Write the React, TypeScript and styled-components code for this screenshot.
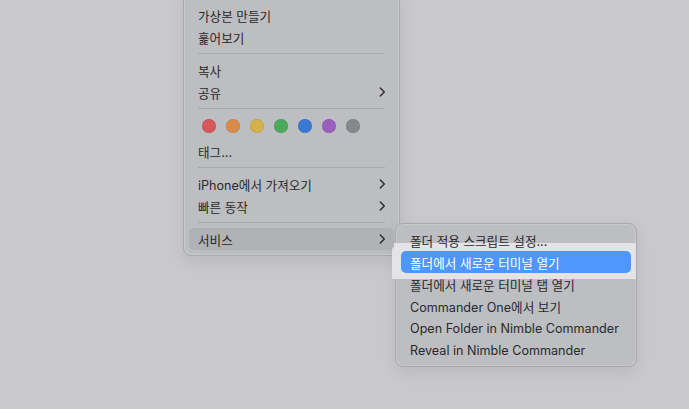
import React from "react";
import styled, { createGlobalStyle, css } from "styled-components";

const GlobalStyle = createGlobalStyle`
  html, body {
    margin: 0;
    padding: 0;
    background: #c9c9cd;
  }
  body {
    font-family: "Inter", "Noto Sans CJK KR", "Noto Sans", sans-serif;
    -webkit-font-smoothing: antialiased;
  }
`;

const Desktop = styled.div`
  position: relative;
  width: 689px;
  height: 409px;
  overflow: hidden;
  background: #c9c9cd;
`;

const Menu = styled.div<{ $left: number; $top: number; $width: number; $padTop?: number }>`
  position: absolute;
  left: ${(p) => p.$left}px;
  top: ${(p) => p.$top}px;
  width: ${(p) => p.$width}px;
  box-sizing: border-box;
  padding: ${(p) => p.$padTop ?? 5}px 5px 5px;
  display: flex;
  flex-direction: column;
  background: #bdbec2;
  border: 1px solid #a8a9ad;
  border-radius: 8px;
  box-shadow: inset 0 0 0 1px rgba(255, 255, 255, 0.18),
    0 6px 16px rgba(0, 0, 0, 0.08);
`;

const Row = styled.div<{ $state?: "gray" | "blue" }>`
  position: relative;
  z-index: 1;
  height: 22px;
  display: flex;
  align-items: center;
  justify-content: space-between;
  padding: 0 8px 0 9px;
  border-radius: 5px;
  font-size: 12.6px;
  color: #29292b;
  white-space: nowrap;
  ${(p) =>
    p.$state === "gray" &&
    css`
      background: #b1b2b6;
    `}
  ${(p) =>
    p.$state === "blue" &&
    css`
      background: #4f97fe;
      color: #ffffff;
    `}
`;

const Separator = styled.div`
  height: 11px;
  display: flex;
  align-items: center;
  padding: 0 9px;
  &::after {
    content: "";
    flex: 1;
    height: 1px;
    background: #a9aaae;
  }
`;

const DotRow = styled.div`
  height: 26px;
  box-sizing: border-box;
  padding: 5px 9px 0 13px;
  display: flex;
  align-items: flex-start;
  gap: 10px;
`;

const Dot = styled.span<{ $color: string }>`
  width: 14px;
  height: 14px;
  border-radius: 50%;
  background: ${(p) => p.$color};
  box-shadow: inset 0 0 0 0.5px rgba(0, 0, 0, 0.12);
`;

const Band = styled.div`
  position: absolute;
  left: -4px;
  top: 19px;
  width: 244px;
  height: 36px;
  background: #e4e4e6;
  z-index: 0;
`;

const Chevron = () => (
  <svg width="7" height="10" viewBox="0 0 7 10">
    <path
      d="M1.3 1 L5.3 5 L1.3 9"
      fill="none"
      stroke="#2b2b2d"
      strokeWidth="1.4"
      strokeLinecap="round"
      strokeLinejoin="round"
    />
  </svg>
);

const tagColors = [
  "#d5575a",
  "#d98c4a",
  "#d5b14b",
  "#4caa5c",
  "#3a78d6",
  "#9a5ebe",
  "#86878a",
];

const App: React.FC = () => {
  return (
    <>
      <GlobalStyle />
      <Desktop>
        <Menu $left={183} $top={-10} $width={217} $padTop={13}>
          <Row>가상본 만들기</Row>
          <Row>훑어보기</Row>
          <Separator />
          <Row>복사</Row>
          <Row>
            공유
            <Chevron />
          </Row>
          <Separator />
          <DotRow>
            {tagColors.map((c) => (
              <Dot key={c} $color={c} />
            ))}
          </DotRow>
          <Row>태그...</Row>
          <Separator />
          <Row>
            iPhone에서 가져오기
            <Chevron />
          </Row>
          <Row>
            빠른 동작
            <Chevron />
          </Row>
          <Separator />
          <Row $state="gray">
            서비스
            <Chevron />
          </Row>
        </Menu>

        <Menu $left={395} $top={223} $width={242}>
          <Band />
          <Row>폴더 적용 스크립트 설정...</Row>
          <Row $state="blue">폴더에서 새로운 터미널 열기</Row>
          <Row>폴더에서 새로운 터미널 탭 열기</Row>
          <Row>Commander One에서 보기</Row>
          <Row>Open Folder in Nimble Commander</Row>
          <Row>Reveal in Nimble Commander</Row>
        </Menu>
      </Desktop>
    </>
  );
};

export default App;
